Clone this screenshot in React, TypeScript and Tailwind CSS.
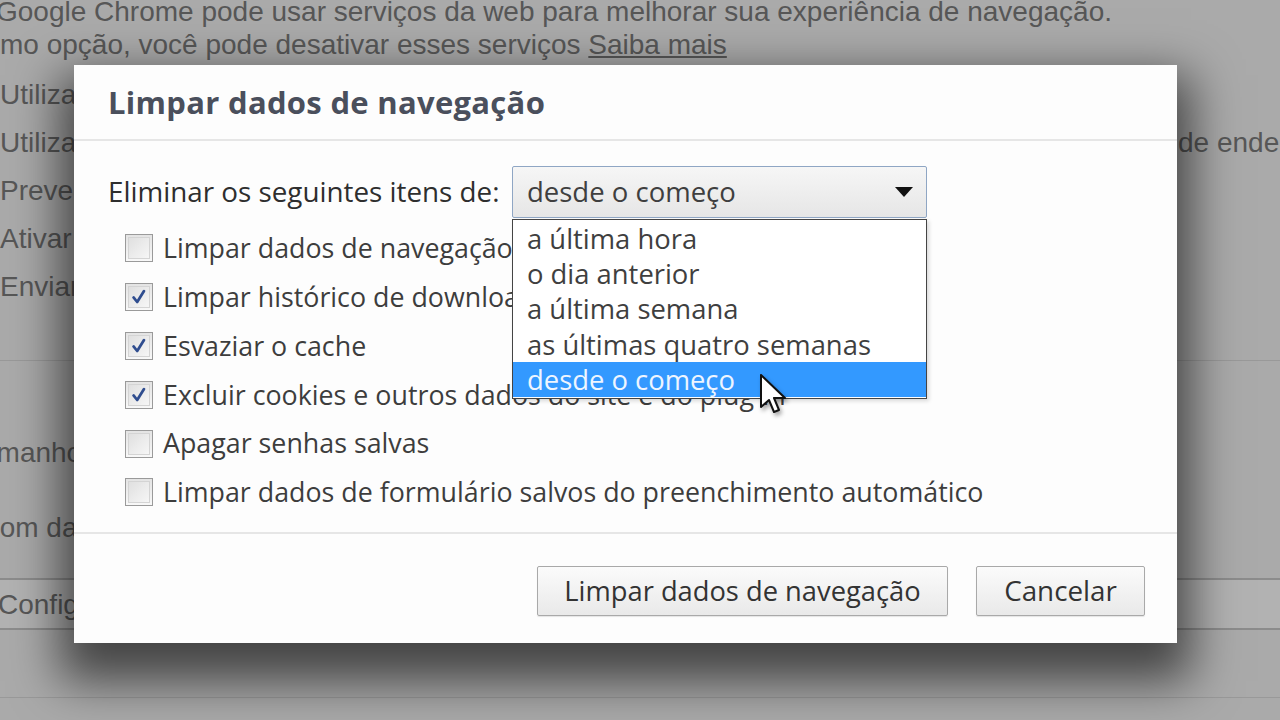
import React from "react";

const dlgFont = { fontFamily: '"Open Sans", "Noto Sans", "Liberation Sans", sans-serif' };

function Check({ checked }: { checked: boolean }) {
  return (
    <div className="relative w-[28px] h-[28px] shrink-0 border border-[#9a9a9a] bg-gradient-to-b from-[#e4e4e4] to-[#f8f8f8] p-[2px]">
      <div className="w-full h-full border border-[#d4d4d4] bg-gradient-to-br from-[#e0e0e0] to-[#f6f6f6]">
        {checked && (
          <svg viewBox="0 0 22 22" className="w-full h-full">
            <path d="M5 11.5 L9 16.5 L16.5 4.5" fill="none" stroke="#2f4d8f" strokeWidth="3" strokeLinecap="round" strokeLinejoin="round" />
          </svg>
        )}
      </div>
    </div>
  );
}

const items: [boolean, string][] = [
  [false, "Limpar dados de navegação"],
  [true, "Limpar histórico de downloads"],
  [true, "Esvaziar o cache"],
  [true, "Excluir cookies e outros dados do site e do plug-in"],
  [false, "Apagar senhas salvas"],
  [false, "Limpar dados de formulário salvos do preenchimento automático"],
];

const options = ["a última hora", "o dia anterior", "a última semana", "as últimas quatro semanas", "desde o começo"];

export default function App() {
  return (
    <div
      className="relative w-[1280px] h-[720px] overflow-hidden bg-[#aaaaaa] text-[#575757] text-[28px]"
      style={{ fontFamily: '"Liberation Sans", Arial, sans-serif' }}
    >
      {/* background settings page */}
      <div className="flex flex-col whitespace-nowrap">
        <div className="h-[33px] leading-[33px] mt-[-5px] ml-[-4px]">
          Google Chrome pode usar serviços da web para melhorar sua experiência de navegação.
        </div>
        <div className="h-[33px] leading-[33px]">
          mo opção, você pode desativar esses serviços <span className="underline">Saiba mais</span>
        </div>
        <div className="mt-[10px] h-[48px] leading-[48px]">Utilizar um serviço da web para ajudar a resolver erros de navegação</div>
        <div className="h-[48px] leading-[48px] flex">
          <span className="w-[1178px] shrink-0 overflow-hidden">Utilizar um serviço de previsão para ajudar a completar pesquisas</span>
          <span className="shrink-0">de endereço</span>
        </div>
        <div className="h-[48px] leading-[48px]">Prever ações da rede para melhorar o desempenho</div>
        <div className="h-[48px] leading-[48px]">Ativar proteção contra phishing e malware</div>
        <div className="h-[48px] leading-[48px]">Enviar automaticamente estatísticas de uso</div>
        <div className="mt-[49px] border-t border-[#999]" />
        <div className="mt-[70px] h-[44px] leading-[44px] ml-[-33px]">Tamanho da fonte</div>
        <div className="mt-[31px] h-[44px] leading-[44px] ml-[-33px]">Zoom da página</div>
        <div className="mt-[28px] h-[52px] leading-[50px] border-y-2 border-[#8c8c8c] bg-[#b2b2b2] ml-[-2px]">Configurações de conteúdo</div>
        <div className="mt-[67px] border-t border-[#999]" />
      </div>

      {/* dialog */}
      <div
        className="absolute left-[74px] top-[65px] w-[1103px] h-[578px] bg-[#fdfdfd] flex flex-col shadow-[0_24px_45px_14px_rgba(0,0,0,0.6)]"
        style={dlgFont}
      >
        <div className="h-[76px] shrink-0 border-b-2 border-[#e6e6e6] flex items-center pl-[34px]">
          <span className="text-[31px] font-bold text-[#4a4f5c] tracking-[0.3px]">Limpar dados de navegação</span>
        </div>
        <div className="flex-1 flex flex-col pl-[34px] pt-[25px] relative">
          <div className="flex items-center h-[52px]">
            <span className="text-[27.8px] text-[#2e2e2e] w-[404px]">Eliminar os seguintes itens de:</span>
            <div className="w-[415px] h-[52px] border border-[#8fa6c4] rounded-[2px] bg-gradient-to-b from-[#f6f6f6] to-[#e6e6e6] flex items-center pl-[14px] pr-[13px] justify-between">
              <span className="text-[27.5px] text-[#3f3f3f]">desde o começo</span>
              <svg width="18" height="10" viewBox="0 0 18 10">
                <path d="M0 0 H18 L9 10 Z" fill="#111" />
              </svg>
            </div>
          </div>
          <div className="flex flex-col mt-[6px] pl-[17px]">
            {items.map(([c, t]) => (
              <div key={t} className="flex items-center h-[48.8px] gap-[10px]">
                <Check checked={c} />
                <span className="text-[26.8px] text-[#3d3d3d]">{t}</span>
              </div>
            ))}
          </div>

          {/* dropdown list */}
          <div className="absolute left-[438px] top-[78px] w-[415px] h-[180px] bg-white border border-[#444] pt-[1px] flex flex-col shadow-[2px_2px_4px_rgba(0,0,0,0.15)]">
            {options.map((o, i) => (
              <div
                key={o}
                className={
                  "h-[35.2px] leading-[35px] pl-[14px] text-[27.4px] " +
                  (i === 4 ? "bg-[#3399ff] text-[#eef5ff]" : "text-[#3f3f3f]")
                }
              >
                {o}
              </div>
            ))}
          </div>
        </div>
        <div className="h-[111px] shrink-0 border-t-2 border-[#e6e6e6] flex justify-end items-start pt-[32px] pr-[32px] gap-[28px]">
          <button className="w-[411px] h-[50px] border border-[#a9a9a9] rounded-[2px] bg-gradient-to-b from-[#fbfbfb] to-[#e9e9e9] text-[27.3px] text-[#333] shadow-[0_1px_1px_rgba(0,0,0,0.1)]">
            Limpar dados de navegação
          </button>
          <button className="w-[169px] h-[50px] border border-[#a9a9a9] rounded-[2px] bg-gradient-to-b from-[#fbfbfb] to-[#e9e9e9] text-[27.8px] text-[#333] shadow-[0_1px_1px_rgba(0,0,0,0.1)]">
            Cancelar
          </button>
        </div>
      </div>

      {/* cursor */}
      <svg className="absolute left-[759px] top-[373px]" width="34" height="48" viewBox="0 0 34 48" style={{ filter: "drop-shadow(2px 3px 2px rgba(0,0,0,0.35))" }}>
        <path d="M2 2 L2 34 L10 27 L15 39 L20 37 L15 25 L26 25 Z" fill="#fff" stroke="#111" strokeWidth="2" strokeLinejoin="round" />
      </svg>
    </div>
  );
}
